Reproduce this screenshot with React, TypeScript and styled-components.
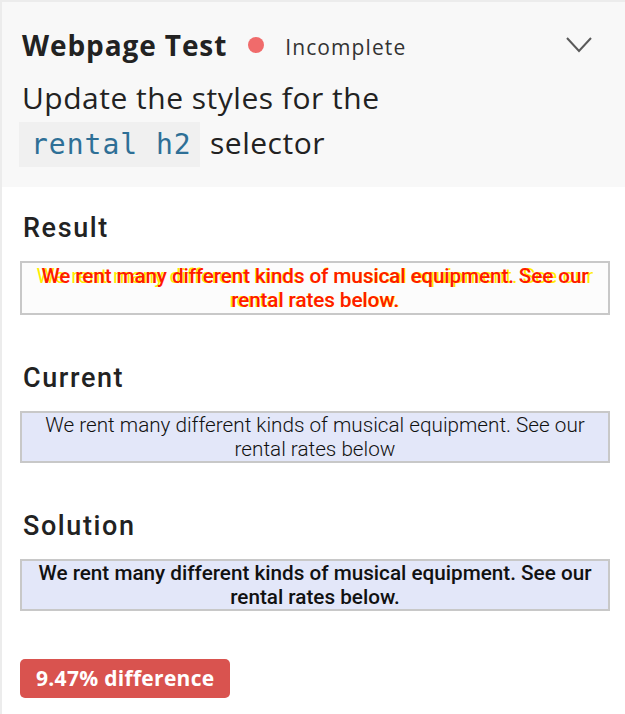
import styled, { createGlobalStyle } from "styled-components";

const GlobalStyle = createGlobalStyle`
  html, body {
    margin: 0;
    padding: 0;
    background: #ffffff;
  }
  body {
    font-family: "Open Sans", "Lato", sans-serif;
    color: #222;
  }
`;

const LINE_ONE = "We rent many different kinds of musical equipment. See our";
const LINE_TWO = "rental rates below";

function App() {
  return (
    <>
      <GlobalStyle />
      <Card>
        <Header>
          <TitleRow>
            <Title>Webpage Test</Title>
            <StatusDot />
            <Status>Incomplete</Status>
            <Chevron width="28" height="18" viewBox="0 0 28 18">
              <polyline points="2,2 14,15 26,2" fill="none" stroke="#5a5a5a" strokeWidth="2" />
            </Chevron>
          </TitleRow>
          <Prompt>
            Update the styles for the
            <br />
            <Code>rental h2</Code> selector
          </Prompt>
        </Header>
        <Body>
          <Section>
            <Label>Result</Label>
            <Frame $tall>
              <DiffStack>
                <DiffLayer $color="#ffee00" $weight={400} $spacing="0.15px">
                  {LINE_ONE}
                  <br />
                  {LINE_TWO}.
                </DiffLayer>
                <DiffLayer $color="#ff1a00" $weight={500} $spacing="-0.1px">
                  {LINE_ONE}
                  <br />
                  {LINE_TWO}.
                </DiffLayer>
              </DiffStack>
            </Frame>
          </Section>
          <Section>
            <Label>Current</Label>
            <Frame $tint>
              <Preview $weight={300}>
                {LINE_ONE} {LINE_TWO}
              </Preview>
            </Frame>
          </Section>
          <Section>
            <Label>Solution</Label>
            <Frame $tint>
              <Preview $weight={500}>
                {LINE_ONE} {LINE_TWO}.
              </Preview>
            </Frame>
          </Section>
          <Badge>9.47% difference</Badge>
        </Body>
      </Card>
    </>
  );
}

export default App;

const Card = styled.div`
  border-left: 2px solid #ececec;
  border-top: 2px solid #ececec;
  min-height: 712px;
  box-sizing: border-box;
`;

const Header = styled.div`
  background: #f8f8f8;
  padding: 22px 20px 20px 20px;
`;

const TitleRow = styled.div`
  display: flex;
  align-items: center;
  height: 42px;
`;

const Title = styled.h1`
  margin: 0;
  font-family: "Open Sans", sans-serif;
  font-weight: 700;
  font-size: 28px;
  color: #222;
  letter-spacing: 0.9px;
`;

const StatusDot = styled.span`
  width: 16px;
  height: 16px;
  border-radius: 50%;
  background: #f06b6b;
  margin-left: 21px;
`;

const Status = styled.span`
  margin-left: 21px;
  font-size: 21px;
  letter-spacing: 1.1px;
  color: #333;
  padding-top: 3px;
`;

const Chevron = styled.svg`
  margin-left: auto;
  margin-right: 12px;
`;

const Prompt = styled.p`
  margin: 9px 0 0 0;
  font-size: 30px;
  letter-spacing: 0.5px;
  line-height: 45px;
  color: #222;
`;

const Code = styled.code`
  font-family: "DejaVu Sans Mono", monospace;
  font-size: 28px;
  letter-spacing: 1px;
  color: #2e6f96;
  background: #f0f0f0;
  padding: 6px 8px 6px 12px;
  margin-left: -3px;
  margin-right: 2px;
`;

const Body = styled.div`
  padding: 25px 15px 16px 18px;
`;

const Section = styled.section`
  margin-bottom: 47px;
`;

const Label = styled.h2`
  margin: 0 0 17px 3px;
  font-family: "Roboto", sans-serif;
  font-weight: 500;
  font-size: 27px;
  line-height: 32px;
  letter-spacing: 1.6px;
  color: #222;
`;

const Frame = styled.div<{ $tint?: boolean; $tall?: boolean }>`
  border: 2px solid #c8c8c8;
  background: ${(p) => (p.$tint ? "#e3e7f9" : "#fcfcfc")};
  height: ${(p) => (p.$tall ? "50px" : "48px")};
  display: flex;
  align-items: center;
  justify-content: center;
  padding: 0 14px;
`;

const Preview = styled.div<{ $weight: number }>`
  font-family: "Roboto", sans-serif;
  font-size: 20.7px;
  line-height: 24px;
  font-weight: ${(p) => p.$weight};
  text-align: center;
  color: #111;
`;

const DiffStack = styled.div`
  display: grid;
`;

const DiffLayer = styled.div<{ $color: string; $weight: number; $spacing: string }>`
  grid-area: 1 / 1;
  font-family: "Roboto", sans-serif;
  font-size: 20.7px;
  line-height: 24px;
  font-weight: ${(p) => p.$weight};
  text-align: center;
  white-space: nowrap;
  color: ${(p) => p.$color};
  letter-spacing: ${(p) => p.$spacing};
`;

const Badge = styled.div`
  display: inline-block;
  margin-top: 1px;
  background: #d9534f;
  color: #fff;
  font-family: "Open Sans", sans-serif;
  font-weight: 700;
  font-size: 21px;
  letter-spacing: 0.3px;
  padding: 5px 15px 6px 16px;
  border-radius: 5px;
`;
